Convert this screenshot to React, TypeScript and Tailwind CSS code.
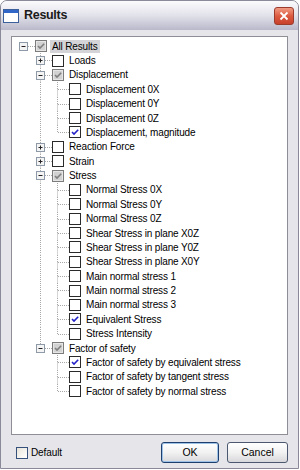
import React from "react"

type CheckState = "on" | "off" | "mixed"

interface Node {
  label: string
  state: CheckState
  expanded?: boolean
  selected?: boolean
  children?: Node[]
  collapsed?: boolean
}

interface FlatRow {
  node: Node
  level: number
  guides: boolean[]
  hasNext: boolean
}

const leaf = (label: string, state: CheckState = "off"): Node => ({ label, state })

const TREE: Node[] = [
  {
    label: "All Results",
    state: "mixed",
    expanded: true,
    selected: true,
    children: [
      { label: "Loads", state: "off", collapsed: true },
      {
        label: "Displacement",
        state: "mixed",
        expanded: true,
        children: [
          leaf("Displacement 0X"),
          leaf("Displacement 0Y"),
          leaf("Displacement 0Z"),
          leaf("Displacement, magnitude", "on"),
        ],
      },
      { label: "Reaction Force", state: "off", collapsed: true },
      { label: "Strain", state: "off", collapsed: true },
      {
        label: "Stress",
        state: "mixed",
        expanded: true,
        children: [
          leaf("Normal Stress 0X"),
          leaf("Normal Stress 0Y"),
          leaf("Normal Stress 0Z"),
          leaf("Shear Stress in plane X0Z"),
          leaf("Shear Stress in plane Y0Z"),
          leaf("Shear Stress in plane X0Y"),
          leaf("Main normal stress 1"),
          leaf("Main normal stress 2"),
          leaf("Main normal stress 3"),
          leaf("Equivalent Stress", "on"),
          leaf("Stress Intensity"),
        ],
      },
      {
        label: "Factor of safety",
        state: "mixed",
        expanded: true,
        children: [
          leaf("Factor of safety by equivalent stress", "on"),
          leaf("Factor of safety by tangent stress"),
          leaf("Factor of safety by normal stress"),
        ],
      },
    ],
  },
]

function flatten(nodes: Node[], level: number, guides: boolean[], out: FlatRow[]) {
  nodes.forEach((node, i) => {
    const hasNext = i < nodes.length - 1
    out.push({ node, level, guides, hasNext })
    if (node.children && node.expanded) {
      flatten(node.children, level + 1, [...guides, hasNext], out)
    }
  })
  return out
}

const ROWS = flatten(TREE, 0, [], [])
const LINE = "#a8a8a8"

// indent column for an ancestor level
function Guide({ on }: { on: boolean }) {
  return (
    <svg width="17" height="100%" className="shrink-0 h-full overflow-visible">
      {on && <line x1="8.5" y1="0" x2="8.5" y2="100%" stroke={LINE} strokeDasharray="1 1" />}
    </svg>
  )
}

function Connector({ row }: { row: FlatRow }) {
  const hasKids = !!row.node.children || row.node.collapsed
  const open = row.node.expanded
  return (
    <svg width="20" height="100%" className="shrink-0 h-full overflow-visible" viewBox="0 0 20 14.375">
      {row.level > 0 && <line x1="8.5" y1="0" x2="8.5" y2="7.5" stroke={LINE} strokeDasharray="1 1" />}
      {row.hasNext && <line x1="8.5" y1="7.5" x2="8.5" y2="14.375" stroke={LINE} strokeDasharray="1 1" />}
      <line x1="9" y1="7.5" x2="20" y2="7.5" stroke={LINE} strokeDasharray="1 1" />
      {hasKids && (
        <g>
          <rect x="4.5" y="3.5" width="8" height="8" fill="#f4f4f4" stroke="#8f9aa8" />
          <line x1="6.5" y1="7.5" x2="10.5" y2="7.5" stroke="#222" />
          {!open && <line x1="8.5" y1="5.5" x2="8.5" y2="9.5" stroke="#222" />}
        </g>
      )}
    </svg>
  )
}

function Check({ state }: { state: CheckState }) {
  if (state === "mixed") {
    return (
      <svg width="12" height="12" className="shrink-0">
        <rect x="0.5" y="0.5" width="11" height="11" fill="#c4c4c4" stroke="#7c7c7c" />
        <rect x="1.5" y="1.5" width="9" height="9" fill="#d2d2d2" stroke="#e6e6e6" />
        <path d="M3 6 L5 8 L9.2 3.8" fill="none" stroke="#808080" strokeWidth="1.6" />
      </svg>
    )
  }
  return (
    <svg width="12" height="12" className="shrink-0">
      <rect x="0.5" y="0.5" width="11" height="11" fill="#fff" stroke="#2a2a2a" />
      {state === "on" && <path d="M3 6 L5 8 L9.2 3.8" fill="none" stroke="#2323c8" strokeWidth="1.6" />}
    </svg>
  )
}

function TreeRow({ row }: { row: FlatRow }) {
  return (
    <div className="flex h-[14.375px] items-center">
      {row.guides.map((g, i) => (
        <Guide key={i} on={g} />
      ))}
      <Connector row={row} />
      <Check state={row.node.state} />
      <span
        className={
          row.node.selected
            ? "ml-[3px] bg-[#d4d4d8] px-[2px] leading-[13px] whitespace-nowrap"
            : "ml-[5px] leading-[13px] whitespace-nowrap"
        }
      >
        {row.node.label}
      </span>
    </div>
  )
}

function WinButton({ label, primary }: { label: string; primary?: boolean }) {
  return (
    <button
      className={
        "h-[21px] rounded-[3px] bg-gradient-to-b from-white via-[#f2f2f2] to-[#d8d8dc] text-[10.5px] text-black " +
        (primary
          ? "w-[58px] border border-[#1e3f6e] shadow-[inset_0_0_0_1px_#9cc2e8]"
          : "w-[61px] border border-[#4c5870]")
      }
    >
      {label}
    </button>
  )
}

export default function App() {
  return (
    <div
      className="w-[300px] h-[470px] bg-white"
      style={{ fontFamily: '"Liberation Sans", Arial, sans-serif' }}
    >
      <div className="flex h-[469px] w-[299px] flex-col overflow-hidden rounded-t-[7px] border border-[#8a8a9a] bg-[#e6e6ea]">
        {/* title bar */}
        <div className="flex h-[29px] items-center bg-gradient-to-b from-[#fbfbfd] via-[#e2e2ea] to-[#b9b9cb] pl-[2px] pr-[4px]">
          <svg width="16" height="14" className="shrink-0">
            <rect x="0.5" y="0.5" width="15" height="13" fill="#fff" stroke="#3a5f9a" />
            <rect x="1" y="1" width="14" height="3" fill="#2f66c8" />
          </svg>
          <span className="ml-[5px] text-[12.5px] font-bold tracking-[-0.3px] text-[#1a1a1a]">Results</span>
          <div className="ml-auto flex h-[18px] w-[20px] items-center justify-center rounded-[3px] border border-[#9c3a2c] bg-gradient-to-b from-[#f09a82] via-[#dc5a40] to-[#c8402a]">
            <svg width="10" height="10">
              <path d="M1.5 1.5 L8.5 8.5 M8.5 1.5 L1.5 8.5" stroke="#fff" strokeWidth="1.8" />
            </svg>
          </div>
        </div>

        {/* body */}
        <div className="flex flex-1 flex-col px-[10px] pt-[6px] pb-[5px]">
          <div className="h-[399px] border border-[#8e8e96] bg-white pt-[2px] pl-[3px] text-[10px] tracking-[-0.15px] text-black">
            {ROWS.map((row, i) => (
              <TreeRow key={i} row={row} />
            ))}
          </div>
          <div className="mt-[7px] flex items-center">
            <div className="ml-[5px] h-[12px] w-[12px] border border-[#35507a] bg-gradient-to-br from-[#e8e4da] to-white" />
            <span className="ml-[3px] text-[10px] tracking-[-0.1px]">Default</span>
            <div className="ml-auto flex gap-[8px]">
              <WinButton label="OK" primary />
              <WinButton label="Cancel" />
            </div>
          </div>
        </div>
      </div>
    </div>
  )
}
